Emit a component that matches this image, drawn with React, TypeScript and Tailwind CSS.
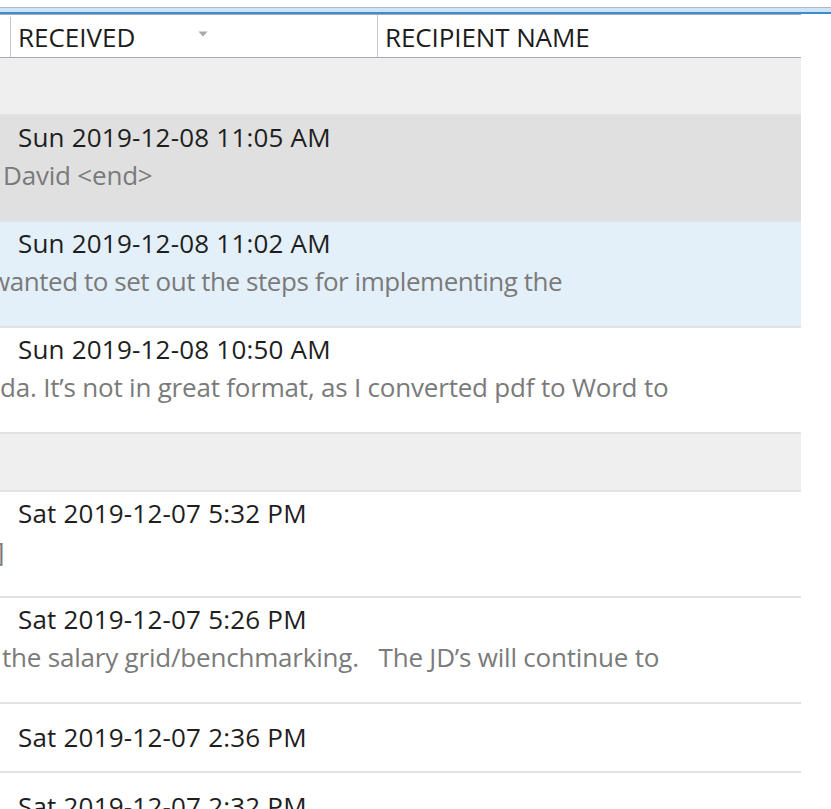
import React from 'react'

type Row =
  | { kind: 'group' }
  | { kind: 'mail'; date: string; preview?: string; shift?: string; bg?: string }

const rows: Row[] = [
  { kind: 'group' },
  { kind: 'mail', date: 'Sun 2019-12-08 11:05 AM', preview: 'David <end>', shift: 'ml-[3px]', bg: 'bg-[#e0e0e0]' },
  { kind: 'mail', date: 'Sun 2019-12-08 11:02 AM', preview: 'wanted to set out the steps for implementing the', shift: 'ml-[-10px] tracking-[-0.45px]', bg: 'bg-[#e4f0f9]' },
  { kind: 'mail', date: 'Sun 2019-12-08 10:50 AM', preview: 'da. It’s not in great format, as I converted pdf to Word to', shift: 'ml-[0px]' },
  { kind: 'group' },
  { kind: 'mail', date: 'Sat 2019-12-07 5:32 PM', preview: ']', shift: 'ml-[-4px]' },
  { kind: 'mail', date: 'Sat 2019-12-07 5:26 PM', preview: 'the salary grid/benchmarking.   The JD’s will continue to', shift: 'ml-[2px]' },
  { kind: 'mail', date: 'Sat 2019-12-07 2:36 PM' },
  { kind: 'mail', date: 'Sat 2019-12-07 2:32 PM' },
]

function SortArrow() {
  return (
    <svg width="10" height="6" viewBox="0 0 10 6" className="ml-[63px] mb-[6px]">
      <path d="M0.5 0.5 H9.5 L5 5.5 Z" fill="#a3a9b1" />
    </svg>
  )
}

function MailRow({ row }: { row: Extract<Row, { kind: 'mail' }> }) {
  if (!row.preview) {
    return (
      <div className={`h-[69px] border-b-2 border-[#e2e2e2] flex items-center pl-[18px] pb-[1px] ${row.bg ?? 'bg-white'}`}>
        <span className="text-[26px] leading-[38px] tracking-[0.2px] text-[#1e1e1e] whitespace-nowrap">{row.date}</span>
      </div>
    )
  }
  return (
    <div className={`h-[106px] border-b-2 border-[#e2e2e2] pt-[2px] overflow-hidden ${row.bg ?? 'bg-white'}`}>
      <div className="pl-[18px] text-[26px] leading-[38px] tracking-[0.2px] text-[#1e1e1e] whitespace-nowrap">{row.date}</div>
      <div className={`text-[26px] leading-[38px] tracking-[-0.2px] text-[#7a7a7a] whitespace-pre ${row.shift ?? ''}`}>{row.preview}</div>
    </div>
  )
}

export default function App() {
  return (
    <div className="w-[831px] h-[809px] overflow-hidden bg-white font-['Open_Sans',sans-serif]">
      <div className="h-[7px]" />
      {/* window frame strip */}
      <div className="h-[7px] border-t border-[#b2bac3] border-b-2 border-b-[#3f8bd2] bg-[#cde4f7]" />

      <div className="w-[801px] overflow-hidden">
        {/* column headers */}
        <div className="h-[44px] border-t border-[#a4abb4] border-b border-b-[#a6aab2] flex items-end text-[26px] text-[#1c1c1c]">
          <div className="w-[10px] h-full" />
          <div className="w-px h-[40px] bg-[#c6c6c6]" />
          <div className="w-[366px] h-full flex items-center pl-[7px] pt-[2px]">
            <span>RECEIVED</span>
            <SortArrow />
          </div>
          <div className="w-px h-[42px] bg-[#c6c6c6]" />
          <div className="flex-1 h-full flex items-center pl-[7px] pt-[2px]">
            <span className="tracking-[-0.1px]">RECIPIENT NAME</span>
          </div>
        </div>

        {rows.map((row, i) =>
          row.kind === 'group' ? (
            <div key={i} className="h-[58px] bg-[#efefef] border-b-2 border-[#e2e2e2]" />
          ) : (
            <MailRow key={i} row={row} />
          )
        )}
      </div>
    </div>
  )
}
